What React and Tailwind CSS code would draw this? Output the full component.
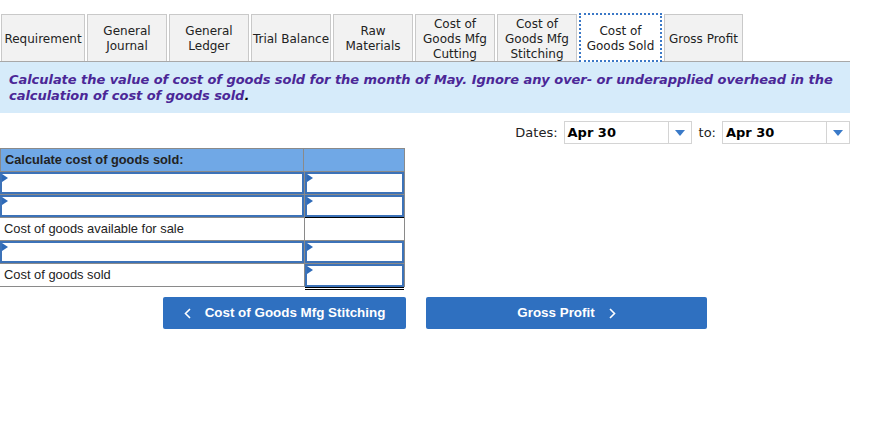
import React from "react";

const tabs = [
  { label: ["Requirement"], w: 84 },
  { label: ["General", "Journal"], w: 80 },
  { label: ["General", "Ledger"], w: 80 },
  { label: ["Trial Balance"], w: 80 },
  { label: ["Raw", "Materials"], w: 80 },
  { label: ["Cost of", "Goods Mfg", "Cutting"], w: 80 },
  { label: ["Cost of", "Goods Mfg", "Stitching"], w: 80 },
  { label: ["Cost of", "Goods Sold"], w: 83, active: true },
  { label: ["Gross Profit"], w: 79 },
];

function Tri() {
  return (
    <svg className="absolute left-0 top-0" width="6" height="8" viewBox="0 0 6 8">
      <polygon points="0,0 6,4 0,8" fill="#2e6ab8" />
    </svg>
  );
}

function InputCell({ w, under }) {
  return (
    <div className={`relative h-full ${w}`}>
      <div className="relative h-full border-2 border-[#3c72b8] bg-white">
        <Tri />
      </div>
      {under === "single" && <div className="absolute left-0 right-0 -bottom-[1px] h-[1px] bg-black" />}
      {under === "double" && (
        <>
          <div className="absolute left-0 right-0 -bottom-[1px] h-[1px] bg-black" />
          <div className="absolute left-0 right-0 -bottom-[3px] h-[1px] bg-black" />
        </>
      )}
    </div>
  );
}

function Select() {
  return (
    <div className="flex h-[23px] w-[128px] border border-[#d4d4d4] bg-white">
      <div className="flex flex-1 items-center pl-[3px] text-[13px] font-bold text-black">Apr 30</div>
      <div className="flex w-[23px] items-center justify-center border-l border-[#d4d4d4]">
        <svg width="10" height="6" viewBox="0 0 10 6">
          <polygon points="0,0 10,0 5,6" fill="#3a7ac8" />
        </svg>
      </div>
    </div>
  );
}

export default function App() {
  const verdana = { fontFamily: '"DejaVu Sans", Verdana, sans-serif' };
  return (
    <div className="h-[445px] w-[883px] bg-white" style={verdana}>
      <div className="w-[850px]">
        {/* Tabs */}
        <div className="flex items-end gap-[2px] pl-[1px] pt-[13px] border-b border-[#a8a8a8]">
          {tabs.map((t, i) =>
            t.active ? (
              <div
                key={i}
                className="-mb-[1px] flex h-[49px] flex-col items-center justify-center border-2 border-dotted border-[#3b78c6] bg-white pt-[3px] text-[12px] leading-[15px] text-[#222]"
                style={{ width: t.w }}
              >
                {t.label.map((l, j) => (
                  <div key={j}>{l}</div>
                ))}
              </div>
            ) : (
              <div
                key={i}
                className="flex h-[47px] flex-col items-center justify-center border border-b-0 border-[#c9c9c9] bg-[#f2f2f2] pt-[2px] text-[12px] leading-[15px] text-[#222]"
                style={{ width: t.w }}
              >
                {t.label.map((l, j) => (
                  <div key={j} className="whitespace-nowrap">{l}</div>
                ))}
              </div>
            )
          )}
        </div>
        {/* Banner */}
        <div className="h-[51px] bg-[#d6ebfa] pl-[9px] pt-[10px] text-[13px] font-bold italic leading-[16px] tracking-[-0.05px] text-[#4b2797]">
          Calculate the value of cost of goods sold for the month of May. Ignore any over- or underapplied overhead in the
          <br />
          calculation of cost of goods sold<span className="text-black">.</span>
        </div>
        {/* Dates */}
        <div className="mt-[8px] flex items-center justify-end text-[13px] text-[#222]">
          <span className="mr-[6px]">Dates:</span>
          <Select />
          <span className="ml-[7px] mr-[6px]">to:</span>
          <Select />
        </div>
      </div>

      {/* Table */}
      <div className="mt-[4px] w-[405px] text-[12.9px] text-[#222]" style={{ fontFamily: '"Liberation Sans", Arial, sans-serif' }}>
        <div className="flex h-[24px] border border-[#8a8a8a] bg-[#70a8e6]">
          <div className="flex w-[303px] items-center border-r border-[#8a8a8a] pl-[4px] text-[12.8px] font-bold">
            Calculate cost of goods sold:
          </div>
          <div className="flex-1" />
        </div>
        <div className="flex h-[23px] border-b border-r border-[#8a8a8a]">
          <InputCell w="w-[304px]" />
          <div className="w-[100px] border-l border-[#8a8a8a]"><InputCell w="w-full" /></div>
        </div>
        <div className="flex h-[23px] border-b border-r border-[#8a8a8a]">
          <InputCell w="w-[304px]" />
          <div className="w-[100px] border-l border-[#8a8a8a]"><InputCell w="w-full" under="single" /></div>
        </div>
        <div className="flex h-[23px] border-b border-r border-[#8a8a8a]">
          <div className="flex w-[304px] items-center pl-[4px]">Cost of goods available for sale</div>
          <div className="w-[100px] border-l border-[#8a8a8a]" />
        </div>
        <div className="flex h-[23px] border-b border-r border-[#8a8a8a]">
          <InputCell w="w-[304px]" />
          <div className="w-[100px] border-l border-[#8a8a8a]"><InputCell w="w-full" /></div>
        </div>
        <div className="flex h-[23px] border-r border-[#8a8a8a]">
          <div className="flex w-[304px] items-center border-b border-[#8a8a8a] pl-[4px]">Cost of goods sold</div>
          <div className="w-[100px] border-l border-[#8a8a8a]"><InputCell w="w-full" under="double" /></div>
        </div>
      </div>

      {/* Buttons */}
      <div className="mt-[10px] flex gap-[20px] pl-[163px]" style={{ fontFamily: '"Liberation Sans", Arial, sans-serif' }}>
        <div className="flex h-[32px] w-[243px] items-center justify-center gap-[14px] rounded-[2px] bg-[#2f70c0] text-[13.4px] font-bold text-white">
          <svg width="7" height="11" viewBox="0 0 7 11"><polyline points="6,1 1.5,5.5 6,10" fill="none" stroke="white" strokeWidth="1.6" /></svg>
          <span>Cost of Goods Mfg Stitching</span>
        </div>
        <div className="flex h-[32px] w-[281px] items-center justify-center gap-[14px] rounded-[2px] bg-[#2f70c0] text-[13.4px] font-bold text-white">
          <span>Gross Profit</span>
          <svg width="7" height="11" viewBox="0 0 7 11"><polyline points="1,1 5.5,5.5 1,10" fill="none" stroke="white" strokeWidth="1.6" /></svg>
        </div>
      </div>
    </div>
  );
}
